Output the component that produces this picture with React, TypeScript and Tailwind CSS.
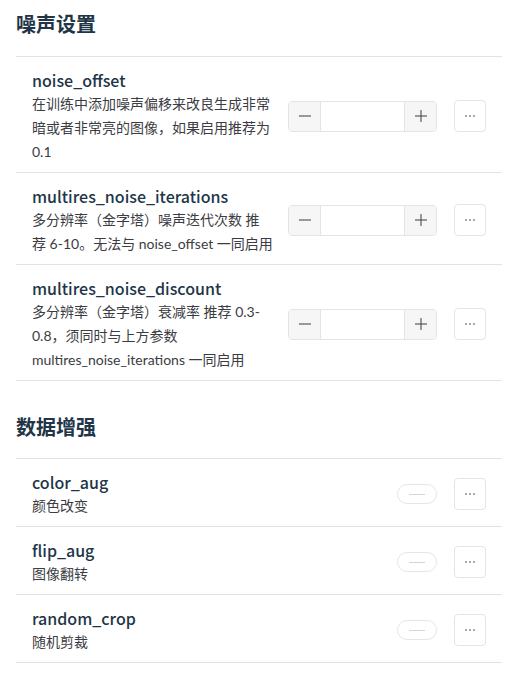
import type { ReactNode } from "react";

const font = { fontFamily: '"Noto Sans CJK SC", "Noto Sans", sans-serif' };
const descFont = { fontFamily: 'Lato, "Noto Sans CJK SC", sans-serif' };

const MoreButton = () => (
  <button className="flex h-8 w-8 shrink-0 items-center justify-center rounded-[4px] border border-[#e4e4e7] bg-white">
    <svg width="12" height="4" viewBox="0 0 12 4">
      <circle cx="2" cy="2" r="0.8" fill="#3c3c43" />
      <circle cx="6" cy="2" r="0.8" fill="#3c3c43" />
      <circle cx="10" cy="2" r="0.8" fill="#3c3c43" />
    </svg>
  </button>
);

const NumberInput = () => (
  <div className="flex h-[31px] w-[149px] shrink-0 overflow-hidden rounded-[4px] border border-[#e4e4e7]">
    <button className="flex w-8 items-center justify-center border-r border-[#e4e4e7] bg-[#f6f6f7]">
      <svg width="14" height="14" viewBox="0 0 14 14">
        <path d="M1 7h12" stroke="#3c3c43" strokeWidth="1" />
      </svg>
    </button>
    <input className="min-w-0 flex-1 bg-white outline-none" />
    <button className="flex w-8 items-center justify-center border-l border-[#e4e4e7] bg-[#f6f6f7]">
      <svg width="14" height="14" viewBox="0 0 14 14">
        <path d="M1 7h12M7 1v12" stroke="#3c3c43" strokeWidth="1" />
      </svg>
    </button>
  </div>
);

const Switch = () => (
  <div className="flex h-5 w-10 shrink-0 items-center justify-center rounded-full border border-[#e6e6e8] bg-white">
    <div className="h-px w-4 bg-[#d4d4d8]" />
  </div>
);

const Row = ({ name, desc, control }: { name: string; desc: string[]; control: ReactNode }) => (
  <div className="flex items-center gap-4 border-b border-[#e2e2e3] pb-2 pl-4 pr-4 pt-[11px]">
    <div className="min-w-0 flex-1">
      <div className="text-[16px] font-medium leading-6 text-[#213547]">{name}</div>
      <div className="text-[14px] leading-6 text-[#3c3c43]" style={descFont}>
        {desc.map((line) => (
          <div key={line} className="whitespace-nowrap">
            {line}
          </div>
        ))}
      </div>
    </div>
    <div className="flex items-center gap-[17px]">
      {control}
      <MoreButton />
    </div>
  </div>
);

export default function App() {
  return (
    <div className="min-h-[675px] w-[531px] bg-white px-4" style={font}>
      <div className="w-[486px]">
        <h2 className="mb-[18px] pt-[10px] text-xl font-bold leading-7 text-[#213547]">噪声设置</h2>
        <div className="border-t border-[#e2e2e3]">
          <Row
            name="noise_offset"
            desc={["在训练中添加噪声偏移来改良生成非常", "暗或者非常亮的图像，如果启用推荐为", "0.1"]}
            control={<NumberInput />}
          />
          <Row
            name="multires_noise_iterations"
            desc={["多分辨率（金字塔）噪声迭代次数 推", "荐 6-10。无法与 noise_offset 一同启用"]}
            control={<NumberInput />}
          />
          <Row
            name="multires_noise_discount"
            desc={["多分辨率（金字塔）衰减率 推荐 0.3-", "0.8，须同时与上方参数", "multires_noise_iterations 一同启用"]}
            control={<NumberInput />}
          />
        </div>
        <h2 className="mb-[17px] mt-8 text-xl font-bold leading-7 text-[#213547]">数据增强</h2>
        <div className="border-t border-[#e2e2e3]">
          <Row name="color_aug" desc={["颜色改变"]} control={<Switch />} />
          <Row name="flip_aug" desc={["图像翻转"]} control={<Switch />} />
          <Row name="random_crop" desc={["随机剪裁"]} control={<Switch />} />
        </div>
      </div>
    </div>
  );
}
